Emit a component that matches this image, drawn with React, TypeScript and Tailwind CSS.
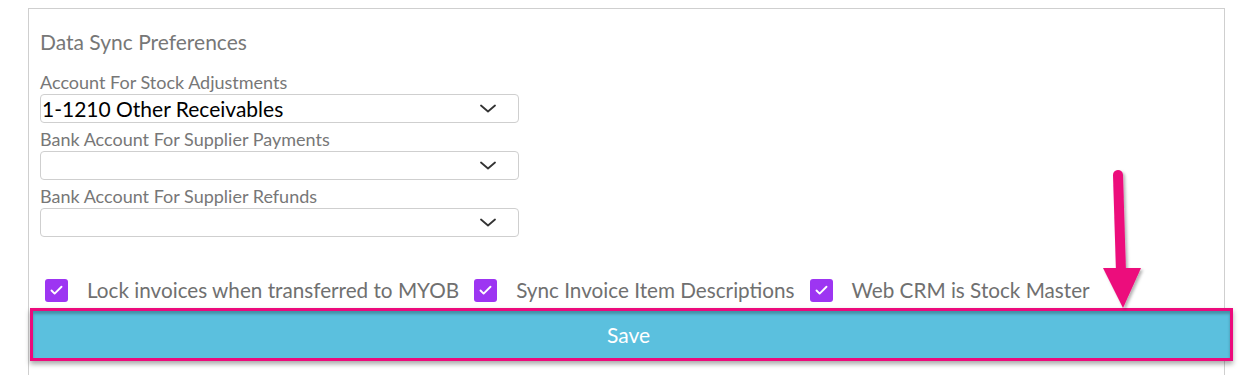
import { Check } from "lucide-react";

const selects = [
  { label: "Account For Stock Adjustments", value: "1-1210 Other Receivables" },
  { label: "Bank Account For Supplier Payments", value: "" },
  { label: "Bank Account For Supplier Refunds", value: "" },
];

const options = [
  "Lock invoices when transferred to MYOB",
  "Sync Invoice Item Descriptions",
  "Web CRM is Stock Master",
];

function Chevron() {
  return (
    <svg width="16" height="9" viewBox="0 0 16 9" className="text-[#333]">
      <polyline points="1,1.5 8,7.5 15,1.5" fill="none" stroke="currentColor" strokeWidth="1.8" strokeLinecap="round" strokeLinejoin="round" />
    </svg>
  );
}

export default function App() {
  return (
    <div className="relative h-[375px] w-full overflow-hidden bg-white" style={{ fontFamily: "Lato, 'Open Sans', sans-serif" }}>
      <div className="ml-[28px] mt-[8px] h-[400px] w-[1197px] border border-b-0 border-[#cfcfcf] pl-[11px]">
        <h3 className="mt-[20px] text-[21px] leading-[26px] text-[#777]">Data Sync Preferences</h3>

        <div className="mt-[15px] w-[479px]">
          {selects.map((s) => (
            <div key={s.label}>
              <div className="text-[18px] leading-[24px] text-[#777]">{s.label}</div>
              <div className="mb-[4px] flex h-[29px] items-center justify-between rounded-[4px] border border-[#cfcfcf] pl-[1px] pr-[22px]">
                <span className="text-[21px] leading-none text-black">{s.value}</span>
                <Chevron />
              </div>
            </div>
          ))}
        </div>

        <div className="mt-[41px] flex items-center pl-[5px]">
          {options.map((o) => (
            <div key={o} className="mr-[15px] flex items-center">
              <span className="flex h-[23px] w-[23px] items-center justify-center rounded-[3px] bg-[#9d35f2]">
                <Check size={15} strokeWidth={3} className="text-white" />
              </span>
              <span className="ml-[19px] text-[20.7px] leading-[24px] text-[#707070]">{o}</span>
            </div>
          ))}
        </div>

        <div className="-ml-[10px] mt-[6px] w-[1203px] border-[3px] border-[#ec0a7c] shadow-[0_3px_5px_rgba(0,0,0,0.35)]">
          <button className="flex h-[47px] w-full items-center justify-center bg-[#5bc0de] pr-[6px] text-[21px] text-white shadow-[inset_0_3px_3px_rgba(0,0,0,0.25)]">
            Save
          </button>
        </div>
      </div>

      <svg className="pointer-events-none absolute left-[1095px] top-[160px]" width="60" height="152" viewBox="0 0 60 152">
        <defs>
          <filter id="sh" x="-50%" y="-50%" width="200%" height="200%">
            <feDropShadow dx="2" dy="2" stdDeviation="1.5" floodColor="#000" floodOpacity="0.3" />
          </filter>
        </defs>
        <g filter="url(#sh)" fill="#ec0a7c" stroke="#ec0a7c">
          <line x1="23" y1="15" x2="26" y2="112" strokeWidth="10" strokeLinecap="round" />
          <polygon points="8,108 46,108 28,148" stroke="none" />
        </g>
      </svg>
    </div>
  );
}
